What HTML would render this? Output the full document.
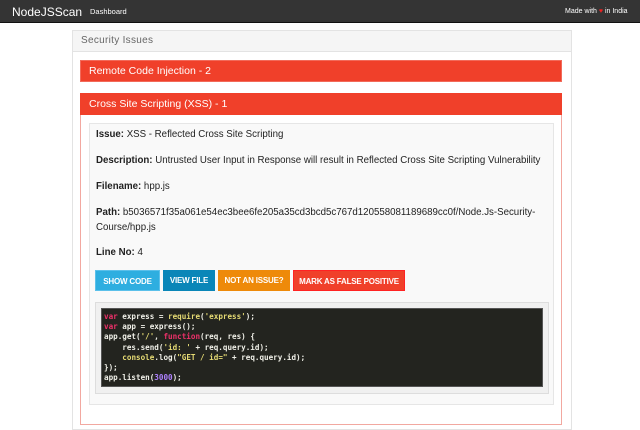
<!DOCTYPE html>
<html><head><meta charset="utf-8"><style>
*{margin:0;padding:0;box-sizing:border-box}
body{width:640px;height:426px;overflow:hidden;background:#fff;font-family:"Liberation Sans",sans-serif;position:relative;color:#222}
.a{position:absolute}
.nav{left:0;top:0;width:640px;height:23px;background:#343434;border-bottom:1px solid #111}
.t{font-size:9.7px;white-space:nowrap}
.btn{position:absolute;top:270px;height:21px;color:#fff;font-size:8px;font-weight:bold;line-height:21px;text-align:center;letter-spacing:-0.2px}
pre{font-family:"DejaVu Sans Mono",monospace;font-size:7.6px;line-height:10.2px;color:#f0f0e8;font-weight:bold}
.k{color:#f0306a}.s{color:#e6db74}.n{color:#ae81ff}
</style></head><body>
<div class="a nav"></div>
<div class="a" style="left:12px;top:5px;color:#fff;font-size:12px">NodeJSScan</div>
<div class="a" style="left:90px;top:7px;color:#fff;font-size:7.5px">Dashboard</div>
<div class="a" style="left:565px;top:8px;color:#fff;font-size:7px">Made with <span style="color:#e22">♥</span> in India</div>

<div class="a" style="left:72px;top:30px;width:500px;height:400px;border:1px solid #e3e3e3;background:#fff"></div>
<div class="a" style="left:73px;top:31px;width:498px;height:21px;background:#f5f5f5;border-bottom:1px solid #e3e3e3"></div>
<div class="a" style="left:81px;top:35px;color:#666;font-size:10px;letter-spacing:0.3px">Security Issues</div>

<div class="a" style="left:80px;top:60px;width:482px;height:22px;background:#f0402a;border:1px solid #f26a5a"></div>
<div class="a" style="left:89px;top:65px;color:#fff;font-size:10.5px">Remote Code Injection - 2</div>

<div class="a" style="left:80px;top:93px;width:482px;height:332px;border:1px solid #f2a8a0"></div>
<div class="a" style="left:80px;top:93px;width:482px;height:22px;background:#f0402a"></div>
<div class="a" style="left:89px;top:98px;color:#fff;font-size:10.5px">Cross Site Scripting (XSS) - 1</div>

<div class="a" style="left:89px;top:123px;width:465px;height:282px;background:#f9f9f9;border:1px solid #e6e6e6"></div>
<div class="a t" style="left:96px;top:129px"><b>Issue:</b> XSS - Reflected Cross Site Scripting</div>
<div class="a t" style="left:96px;top:155px"><b>Description:</b> Untrusted User Input in Response will result in Reflected Cross Site Scripting Vulnerability</div>
<div class="a t" style="left:96px;top:181px"><b>Filename:</b> hpp.js</div>
<div class="a t" style="left:96px;top:207px"><b>Path:</b> b5036571f35a061e54ec3bee6fe205a35cd3bcd5c767d120558081189689cc0f/Node.Js-Security-</div>
<div class="a t" style="left:96px;top:222px">Course/hpp.js</div>
<div class="a t" style="left:96px;top:247px"><b>Line No:</b> 4</div>

<div class="btn" style="left:95px;width:65px;background:#2eaee0;border:1px solid #5bc0ea">SHOW CODE</div>
<div class="btn" style="left:163px;width:52px;background:#0a86b8">VIEW FILE</div>
<div class="btn" style="left:218px;width:72px;background:#ee8a0a">NOT AN ISSUE?</div>
<div class="btn" style="left:293px;width:112px;background:#f0402a;border:1px solid #f22">MARK AS FALSE POSITIVE</div>

<div class="a" style="left:95px;top:302px;width:454px;height:92px;background:#f0f0f0;border:1px solid #ddd"></div>
<div class="a" style="left:101px;top:308px;width:442px;height:79px;background:#23241f;border:1px solid #555"></div>
<pre class="a" style="left:104px;top:312px"><span class="k">var</span> express = <span class="s">require</span>(<span class="s">'express'</span>);
<span class="k">var</span> app = express();
app.get(<span class="s">'/'</span>, <span class="k">function</span>(req, res) {
    res.send(<span class="s">'id: '</span> + req.query.id);
    <span class="s">console</span>.log(<span class="s">"GET / id="</span> + req.query.id);
});
app.listen(<span class="n">3000</span>);</pre>
</body></html>
